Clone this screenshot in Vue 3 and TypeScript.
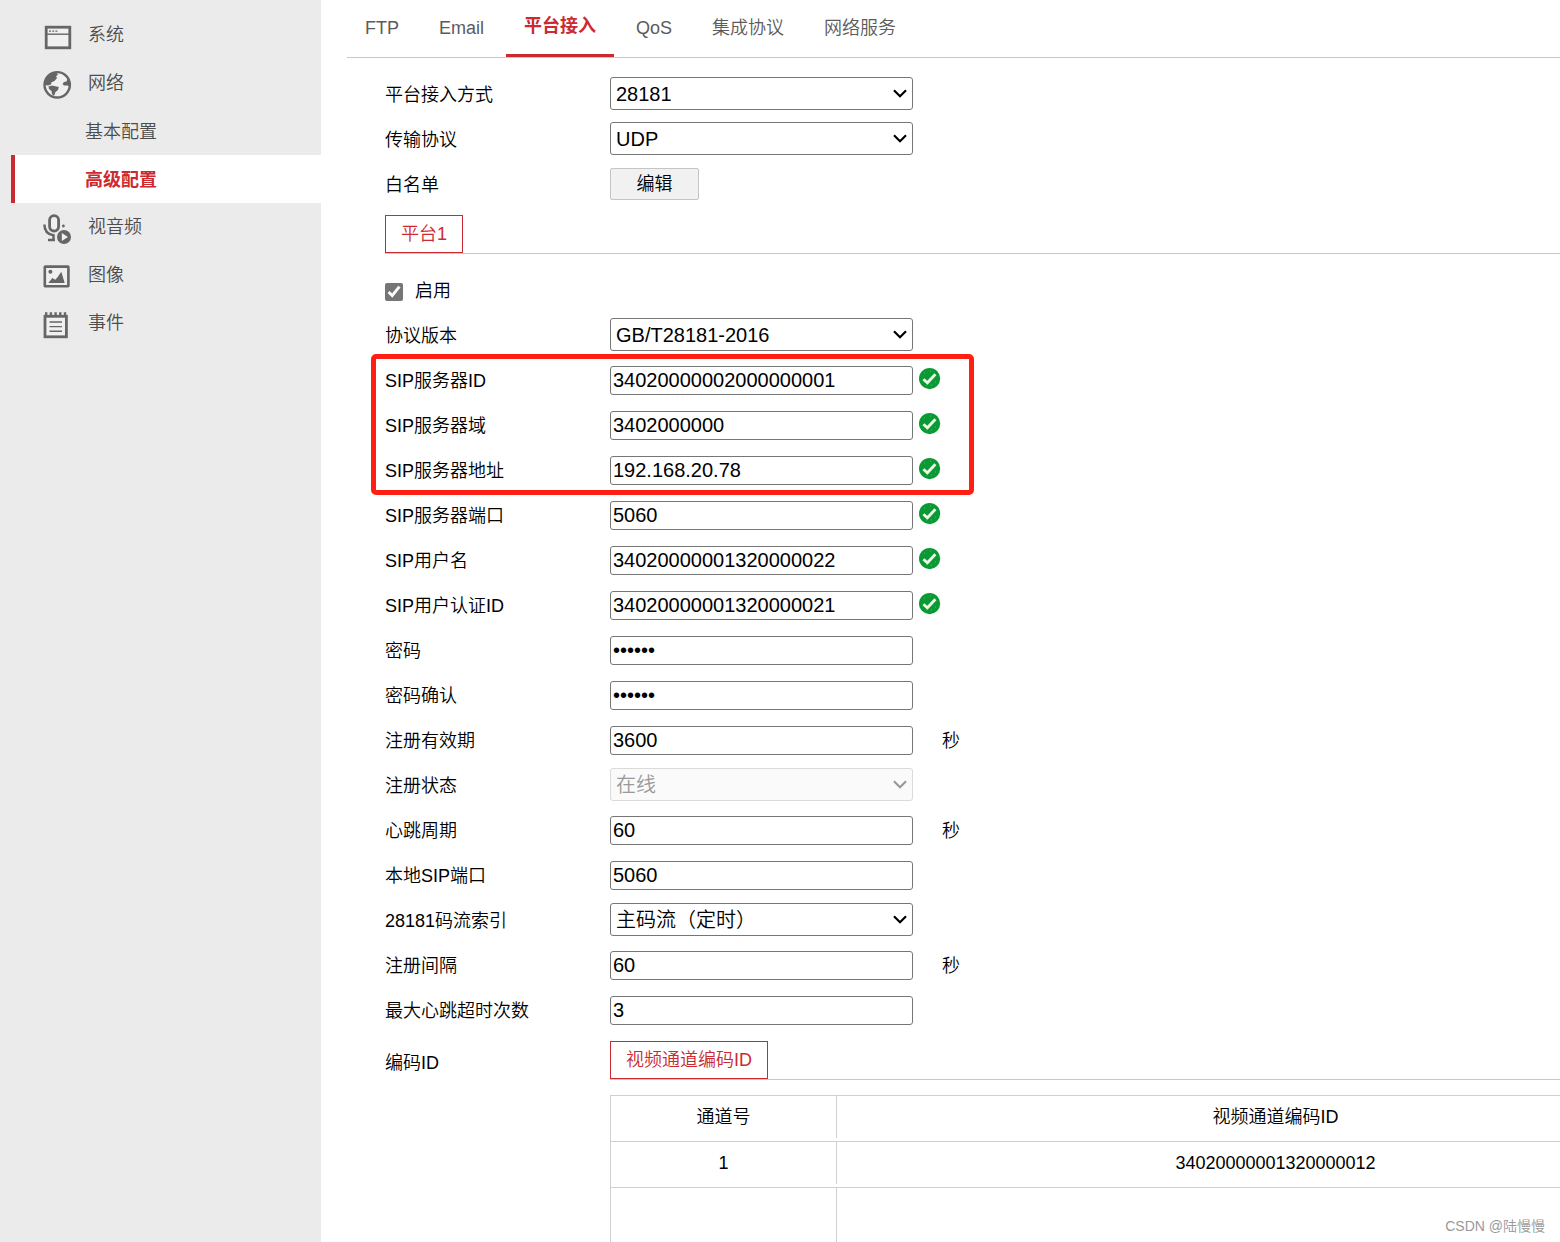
<script setup lang="ts">
import { reactive, ref } from 'vue'

interface Field {
  id: string
  label: string
  kind: 'text' | 'password' | 'select'
  value: string
  options?: string[]
  valid?: boolean
  unit?: string
  disabled?: boolean
}

interface MenuItem {
  label: string
  icon?: 'system' | 'network' | 'av' | 'image' | 'event'
  active?: boolean
}

const menu: MenuItem[] = [
  { label: '系统', icon: 'system' },
  { label: '网络', icon: 'network' },
  { label: '基本配置' },
  { label: '高级配置', active: true },
  { label: '视音频', icon: 'av' },
  { label: '图像', icon: 'image' },
  { label: '事件', icon: 'event' },
]

const tabs = ['FTP', 'Email', '平台接入', 'QoS', '集成协议', '网络服务']
const activeTab = ref('平台接入')
const enabled = ref(true)

const accessFields = reactive<Field[]>([
  { id: 'access-mode', label: '平台接入方式', kind: 'select', value: '28181', options: ['28181'] },
  { id: 'transport', label: '传输协议', kind: 'select', value: 'UDP', options: ['UDP', 'TCP'] },
])

const groups = reactive<{ name: string; marked: boolean; fields: Field[] }[]>([
  {
    name: 'version',
    marked: false,
    fields: [
      { id: 'version', label: '协议版本', kind: 'select', value: 'GB/T28181-2016', options: ['GB/T28181-2016', 'GB/T28181-2011'] },
    ],
  },
  {
    name: 'server',
    marked: true,
    fields: [
      { id: 'sip-id', label: 'SIP服务器ID', kind: 'text', value: '34020000002000000001', valid: true },
      { id: 'sip-domain', label: 'SIP服务器域', kind: 'text', value: '3402000000', valid: true },
      { id: 'sip-address', label: 'SIP服务器地址', kind: 'text', value: '192.168.20.78', valid: true },
    ],
  },
  {
    name: 'register',
    marked: false,
    fields: [
      { id: 'sip-port', label: 'SIP服务器端口', kind: 'text', value: '5060', valid: true },
      { id: 'sip-user', label: 'SIP用户名', kind: 'text', value: '34020000001320000022', valid: true },
      { id: 'sip-auth', label: 'SIP用户认证ID', kind: 'text', value: '34020000001320000021', valid: true },
      { id: 'password', label: '密码', kind: 'password', value: '123456' },
      { id: 'password-confirm', label: '密码确认', kind: 'password', value: '123456' },
      { id: 'expiry', label: '注册有效期', kind: 'text', value: '3600', unit: '秒' },
      { id: 'status', label: '注册状态', kind: 'select', value: '在线', options: ['在线', '离线'], disabled: true },
      { id: 'heartbeat', label: '心跳周期', kind: 'text', value: '60', unit: '秒' },
      { id: 'local-port', label: '本地SIP端口', kind: 'text', value: '5060' },
      { id: 'stream', label: '28181码流索引', kind: 'select', value: '主码流（定时）', options: ['主码流（定时）', '子码流（定时）'] },
      { id: 'interval', label: '注册间隔', kind: 'text', value: '60', unit: '秒' },
      { id: 'timeouts', label: '最大心跳超时次数', kind: 'text', value: '3' },
    ],
  },
])

const channels = [{ no: '1', code: '34020000001320000012' }]
</script>

<template>
  <div class="page">
    <nav class="sidebar">
      <a
        v-for="item in menu"
        :key="item.label"
        href="#"
        class="menu-item"
        :class="{ sub: !item.icon, active: item.active }"
      >
        <svg v-if="item.icon" class="menu-icon" viewBox="0 0 30 30" aria-hidden="true">
          <g v-if="item.icon === 'system'">
            <rect x="4.2" y="5.2" width="23.6" height="20.6" fill="#f0f0f0" stroke="#666" stroke-width="2.8" />
            <path d="M5 12.2H27" stroke="#666" stroke-width="1.4" />
            <path d="M7 9.2h2M10.2 9.2h2M13.4 9.2h2" stroke="#666" stroke-width="1.3" />
          </g>
          <g v-else-if="item.icon === 'network'">
            <circle cx="15.2" cy="14.8" r="12.7" fill="#f0f0f0" stroke="#666" stroke-width="2.4" />
            <path
              d="M3 15C2.5 8 8 2.5 14.5 2.5L16 5L14 6L15 8L12.5 11L9.5 12.2L9 14.5L6 15.5Z M6.5 16.5L10 15.5L16.8 17L16 20L13.5 22L12 26L10 24L9.5 21L7 19Z M20.5 14L22 12L24.5 11.5L25.5 9L28 10V17L25.5 15.5L22 15.5Z"
              fill="#666"
            />
          </g>
          <g v-else-if="item.icon === 'av'">
            <rect x="7.6" y="1.6" width="9" height="15.4" rx="4.5" fill="#f0f0f0" stroke="#666" stroke-width="2.8" />
            <path d="M2.4 10.5C2.5 17 5 20.5 11.5 21.3V26M6 26H13" fill="none" stroke="#666" stroke-width="2.5" />
            <circle cx="21.4" cy="12" r="1.4" fill="#666" />
            <circle cx="22" cy="23" r="7" fill="#666" />
            <path d="M19.8 19V27L26 23Z" fill="#f0f0f0" />
          </g>
          <g v-else-if="item.icon === 'image'">
            <rect x="2.8" y="4.6" width="23.6" height="19.6" rx="0.5" fill="#f0f0f0" stroke="#666" stroke-width="2.6" />
            <circle cx="8.4" cy="9.8" r="2" fill="#666" />
            <path d="M6.3 21L10.3 16L13.3 17.8L15.3 15.5L19.3 9.7L22.7 21Z" fill="#666" />
          </g>
          <g v-else>
            <rect x="3" y="6.3" width="21.4" height="20.5" fill="#f0f0f0" stroke="#666" stroke-width="2.8" />
            <path d="M4.2 2.3V7M8.900 2.3V7M13.6 2.3V7M18.3 2.3V7M23 2.3V7" stroke="#666" stroke-width="2.4" />
            <path d="M7.5 12H20M7.5 16.6H20M7.5 21.3H20" stroke="#666" stroke-width="1.4" />
          </g>
        </svg>
        <span>{{ item.label }}</span>
      </a>
    </nav>

    <main class="content">
      <div class="tabs">
        <a
          v-for="tab in tabs"
          :key="tab"
          href="#"
          class="tab"
          :class="{ active: tab === activeTab }"
          @click.prevent="activeTab = tab"
        >{{ tab }}</a>
      </div>

      <form class="form" @submit.prevent>
        <div v-for="f in accessFields" :key="f.id" class="row">
          <label class="label" :for="f.id">{{ f.label }}</label>
          <select :id="f.id" v-model="f.value" class="select">
            <option v-for="o in f.options" :key="o">{{ o }}</option>
          </select>
        </div>
        <div class="row">
          <span class="label">白名单</span>
          <button type="button" class="edit">编辑</button>
        </div>

        <div class="subtabs platform-tabs">
          <button type="button" class="subtab">平台1</button>
        </div>

        <div class="row">
          <input id="enabled" v-model="enabled" type="checkbox" class="check" />
          <label for="enabled">启用</label>
        </div>

        <div v-for="g in groups" :key="g.name" class="group" :class="{ marked: g.marked }">
          <div v-for="f in g.fields" :key="f.id" class="row">
            <label class="label" :for="f.id">{{ f.label }}</label>
            <select v-if="f.kind === 'select'" :id="f.id" v-model="f.value" class="select" :disabled="f.disabled">
              <option v-for="o in f.options" :key="o">{{ o }}</option>
            </select>
            <input v-else :id="f.id" v-model="f.value" :type="f.kind" class="input" autocomplete="off" />
            <svg v-if="f.valid" class="valid" viewBox="0 0 22 22" aria-hidden="true">
              <circle cx="10.6" cy="10.6" r="10.6" fill="#0a9a35" />
              <path d="M4.4 11.2L8.4 14.8L16.4 6.2" fill="none" stroke="#f1f6e4" stroke-width="2.8" />
              <path d="M5 5h1M11 3h1M16 14h1M12 17h1M7 17h1" stroke="#55b948" stroke-width="1" />
            </svg>
            <span v-if="f.unit" class="unit">{{ f.unit }}</span>
          </div>
        </div>

        <div class="code-row">
          <span class="label code-label">编码ID</span>
          <div class="code-body">
            <div class="subtabs">
              <button type="button" class="subtab">视频通道编码ID</button>
            </div>
            <table class="channels">
              <thead>
                <tr>
                  <th class="no"><div class="cell">通道号</div></th>
                  <th><div class="cell divided">视频通道编码ID</div></th>
                </tr>
              </thead>
              <tbody>
                <tr v-for="c in channels" :key="c.no">
                  <td><div class="cell">{{ c.no }}</div></td>
                  <td><div class="cell divided">{{ c.code }}</div></td>
                </tr>
                <tr class="blank">
                  <td></td>
                  <td><div class="cell divided"></div></td>
                </tr>
              </tbody>
            </table>
          </div>
        </div>
      </form>
    </main>

    <div class="watermark">CSDN @陆慢慢</div>
  </div>
</template>

<style>
body {
  margin: 0;
  background: #fff;
}
</style>

<style scoped>
.page {
  position: relative;
  display: flex;
  min-height: 100vh;
  overflow: hidden;
  color: #000;
  font-family: "Liberation Sans", "Noto Sans CJK SC", sans-serif;
  font-size: 18px;
  font-weight: 350;
  line-height: 24px;
}

.sidebar {
  box-sizing: border-box;
  flex: none;
  width: 321px;
  padding: 11px 0 0 11px;
  background: #ebebeb;
}

.menu-item {
  box-sizing: border-box;
  display: flex;
  align-items: center;
  gap: 16px;
  height: 48px;
  padding-left: 27px;
  border-left: 4px solid transparent;
  color: #4c4c4c;
  text-decoration: none;
}

.menu-item.sub {
  padding-top: 2px;
  padding-left: 70px;
}

.menu-item.active {
  border-left-color: #cb2a31;
  background: #fff;
  color: #cb2a31;
  font-weight: 700;
}

.menu-icon {
  width: 30px;
  height: 30px;
  margin-top: 4px;
}

.content {
  flex: 1;
  min-width: 0;
  padding-left: 26px;
}

.tabs {
  display: flex;
  gap: 4px;
  height: 57px;
  border-bottom: 1px solid #c8c8c8;
}

.tab {
  box-sizing: border-box;
  padding: 16px 18px 0;
  color: #5b5b5b;
  text-decoration: none;
  white-space: nowrap;
}

.tab.active {
  padding-top: 14px;
  border-bottom: 3px solid #cb2a31;
  color: #cb2a31;
  font-weight: 700;
}

.form {
  padding: 14px 0 0 38px;
}

.row {
  display: flex;
  align-items: center;
  height: 45px;
}

.label {
  flex: none;
  width: 225px;
}

.group {
  position: relative;
}

.marked::after {
  content: "";
  position: absolute;
  box-sizing: border-box;
  top: -4px;
  left: -14px;
  width: 603px;
  height: 141px;
  border: 5px solid #ff2013;
  border-radius: 5px;
  pointer-events: none;
}

.select,
.input {
  box-sizing: border-box;
  width: 303px;
  margin: 0;
  border: 1px solid #767676;
  border-radius: 3px;
  background-color: #fff;
  color: #000;
  font-family: inherit;
  font-size: 20px;
  font-weight: 350;
}

.select {
  height: 33px;
  margin-bottom: 2px;
  padding: 0 24px 0 5px;
  appearance: none;
  background-image: url("data:image/svg+xml,%3Csvg xmlns='http://www.w3.org/2000/svg' width='14' height='9'%3E%3Cpath d='M1 1.300L7 7.300L13 1.300' fill='none' stroke='%23000' stroke-width='2.200'/%3E%3C/svg%3E");
  background-repeat: no-repeat;
  background-position: right 5px center;
}

.select:disabled {
  border-color: #dadada;
  background-color: #fafafa;
  background-image: url("data:image/svg+xml,%3Csvg xmlns='http://www.w3.org/2000/svg' width='14' height='9'%3E%3Cpath d='M1 1.300L7 7.300L13 1.300' fill='none' stroke='%23999' stroke-width='2.200'/%3E%3C/svg%3E");
  color: #999;
  opacity: 1;
}

.input {
  height: 29px;
  padding: 0 2px 1px;
}

.edit {
  width: 89px;
  height: 32px;
  margin-bottom: 2px;
  padding: 0;
  border: 1px solid #c5c5c5;
  border-radius: 2px;
  background: #f1f1f1;
  color: #000;
  font: inherit;
}

.check {
  width: 18px;
  height: 18px;
  margin: 2px 12px 0 0;
  accent-color: #767676;
}

.valid {
  width: 22px;
  height: 22px;
  margin: 0 0 4px 6px;
}

.unit {
  margin-left: 29px;
}

.subtabs {
  display: flex;
  height: 38px;
  border-bottom: 1px solid #c8c8c8;
}

.platform-tabs {
  margin: 8px 0 14px;
}

.subtab {
  padding: 0 15px;
  border: 1px solid #cb2a31;
  background: #fff;
  color: #cb2a31;
  font: inherit;
}

.code-row {
  display: flex;
  padding-top: 8px;
}

.code-label {
  padding-top: 10px;
}

.code-body {
  flex: 1;
  min-width: 0;
}

/* The table runs past the right edge of the window. */
.channels {
  width: calc(100% + 154px);
  margin-top: 15px;
  border-left: 1px solid #d0d0d0;
  border-spacing: 0;
  table-layout: fixed;
  text-align: center;
}

.channels th,
.channels td {
  height: 45px;
  padding: 0;
  border-top: 1px solid #d0d0d0;
  font-weight: 350;
  vertical-align: top;
}

.channels .no {
  width: 225px;
}

.cell {
  height: 42px;
  line-height: 42px;
}

.divided {
  border-left: 1px solid #d0d0d0;
}

.channels .blank td,
.blank .cell {
  height: 54px;
}

.watermark {
  position: absolute;
  right: 15px;
  bottom: 4px;
  color: #999;
  font-size: 14px;
}
</style>
